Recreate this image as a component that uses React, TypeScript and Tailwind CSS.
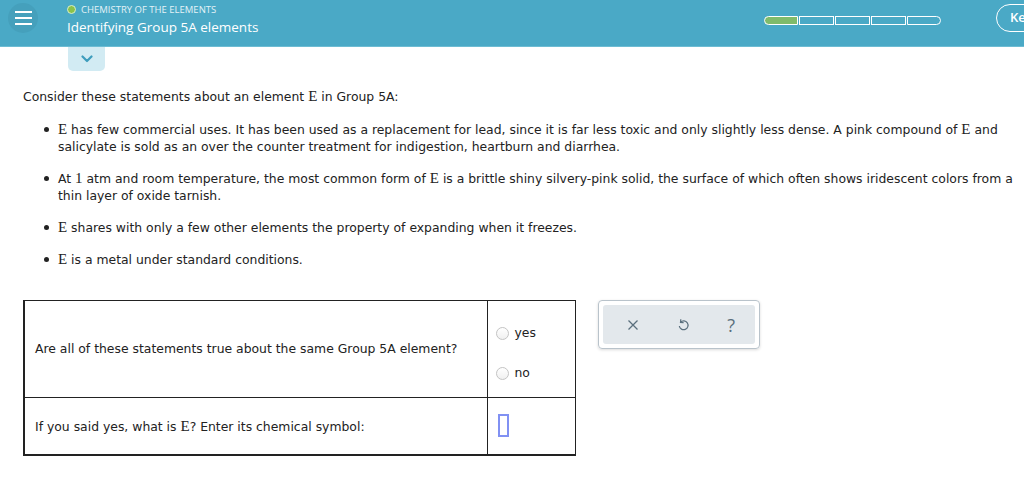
import React from 'react';

const E = () => <span className="font-['Liberation_Serif',serif] text-[15px]">E</span>;

const bullets: React.ReactNode[] = [
  <>
    <E /> has few commercial uses. It has been used as a replacement for lead, since it is far less toxic and only slightly less dense. A pink compound of <E /> and salicylate is sold as an over the counter treatment for indigestion, heartburn and diarrhea.
  </>,
  <>
    At <span className="font-['Liberation_Serif',serif] text-[15px]">1</span> atm and room temperature, the most common form of <E /> is a brittle shiny silvery-pink solid, the surface of which often shows iridescent colors from a thin layer of oxide tarnish.
  </>,
  <>
    <E /> shares with only a few other elements the property of expanding when it freezes.
  </>,
  <>
    <E /> is a metal under standard conditions.
  </>,
];

export default function App() {
  return (
    <div className="w-[1024px] h-[483px] overflow-hidden bg-white font-['DejaVu_Sans',sans-serif] text-[12.4px] text-[#222]">
      <header className="h-[47px] bg-[#4aa9c6] border-b border-[#6dbcd3] flex items-start relative">
        <div className="w-[30px] h-[30px] ml-[8px] mt-[3px] rounded-full bg-[#45a0bc] flex flex-col items-center justify-center gap-[4px]">
          <span className="block w-[17px] h-[2px] bg-white" />
          <span className="block w-[17px] h-[2px] bg-white" />
          <span className="block w-[17px] h-[2px] bg-white" />
        </div>
        <div className="ml-[29px] mt-[5px] flex flex-col font-['Open_Sans',sans-serif]">
          <div className="flex items-center gap-[5px] text-[9.5px] text-[#e3f2f7] leading-none">
            <span className="w-[9px] h-[9px] rounded-full bg-[#8bc34a] border border-[#d8eecc]" />
            CHEMISTRY OF THE ELEMENTS
          </div>
          <div className="text-[13.5px] font-medium text-white mt-[6px] leading-none">Identifying Group 5A elements</div>
        </div>
        <div className="ml-auto mr-[83px] mt-[16px] flex gap-[1px]">
          <div className="w-[34px] h-[9px] bg-[#7fbb6b] border border-white rounded-l-full" />
          <div className="w-[35px] h-[9px] border border-white" />
          <div className="w-[35px] h-[9px] border border-white" />
          <div className="w-[35px] h-[9px] border border-white" />
          <div className="w-[34px] h-[9px] border border-white rounded-r-full" />
        </div>
        <div className="absolute left-[996px] top-[4px] h-[28px] w-[60px] rounded-full border border-white text-white font-['Open_Sans',sans-serif] font-semibold text-[13px] flex items-center pl-[13px]">
          Ke
        </div>
      </header>
      <div className="ml-[68px] w-[37px] h-[24px] bg-[#d2ebf3] rounded-b-[5px] flex items-center justify-center">
        <svg width="12" height="8" viewBox="0 0 12 8">
          <path d="M1.5 1.5 L6 6 L10.5 1.5" stroke="#3e9dbd" strokeWidth="2.2" fill="none" strokeLinecap="round" strokeLinejoin="round" />
        </svg>
      </div>
      <div className="pl-[23px] pt-[16px]">
        <p className="leading-[18px]">Consider these statements about an element <E /> in Group 5A:</p>
        <ul className="mt-[15px] pl-[35px] flex flex-col gap-[15px]">
          {bullets.map((b, i) => (
            <li key={i} className="relative leading-[17px]">
              <span className="absolute -left-[14px] top-[6px] w-[5px] h-[5px] rounded-full bg-[#222]" />
              {b}
            </li>
          ))}
        </ul>
        <div className="mt-[32px] flex items-start">
          <table className="w-[553px] border-collapse border border-[#222] border-l-2 border-b-2">
            <tbody>
              <tr className="h-[97px]">
                <td className="border border-[#222] pl-[10px] pr-[8px] w-[463px]">Are all of these statements true about the same Group 5A element?</td>
                <td className="border border-[#222] pl-[8px]">
                  <div className="flex flex-col gap-[22px] pt-[8px]">
                    <label className="flex items-center gap-[6px] leading-[18px]">
                      <span className="w-[13px] h-[13px] rounded-full border border-[#c4c4c4] bg-gradient-to-b from-white to-[#f0f0f0]" />
                      yes
                    </label>
                    <label className="flex items-center gap-[6px] leading-[18px]">
                      <span className="w-[13px] h-[13px] rounded-full border border-[#c4c4c4] bg-gradient-to-b from-white to-[#f0f0f0]" />
                      no
                    </label>
                  </div>
                </td>
              </tr>
              <tr className="h-[57px]">
                <td className="border border-[#222] pl-[10px]">If you said yes, what is <E />? Enter its chemical symbol:</td>
                <td className="border border-[#222] pl-[10px]">
                  <div className="w-[11px] h-[23px] border-2 border-[#8191f3]" />
                </td>
              </tr>
            </tbody>
          </table>
          <div className="ml-[22px] w-[162px] h-[49px] rounded-[4px] border border-[#b9c3cb] shadow-[0_1px_3px_rgba(0,0,0,0.15)] p-[4px]">
            <div className="w-full h-full rounded-[3px] bg-[#e3e8ec] flex items-center justify-between pl-[24px] pr-[20px] text-[#5a6f7d]">
              <svg width="12" height="12" viewBox="0 0 12 12">
                <path d="M1.5 1.5 L10.5 10.5 M10.5 1.5 L1.5 10.5" stroke="#5a6f7d" strokeWidth="1.3" />
              </svg>
              <svg width="13" height="14" viewBox="0 0 13 14">
                <path d="M3.5 4.2 A4.4 4.4 0 1 1 2.3 8" stroke="#5a6f7d" strokeWidth="1.2" fill="none" />
                <path d="M3.8 1.2 L3.5 4.4 L6.6 4.6" stroke="#5a6f7d" strokeWidth="1.2" fill="none" />
              </svg>
              <span className="font-['Open_Sans',sans-serif] text-[18px] leading-none">?</span>
            </div>
          </div>
        </div>
      </div>
    </div>
  );
}
